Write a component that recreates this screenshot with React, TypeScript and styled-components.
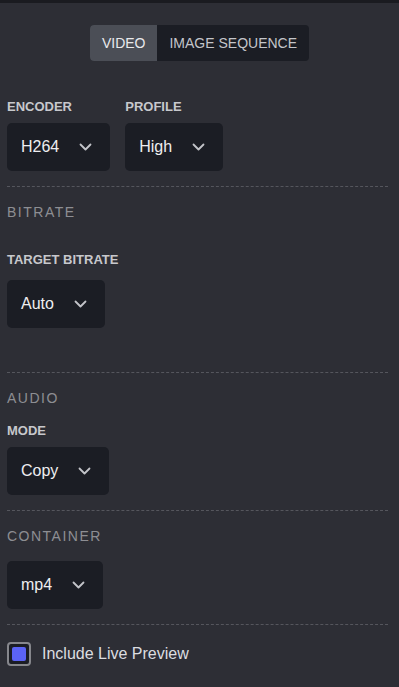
import React, { useState } from 'react';
import styled, { createGlobalStyle } from 'styled-components';

const GlobalStyle = createGlobalStyle`
    html, body {
        margin: 0;
        padding: 0;
        background: #2d2e35;
    }
    body {
        font-family: "Liberation Sans", Arial, sans-serif;
        color: #e6e6e8;
    }
`;

const Panel = styled.div`
    width: 399px;
    min-height: 687px;
    box-sizing: border-box;
    background: #2d2e35;
    border-top: 3px solid #1a1b20;
    padding: 22px 11px 0 7px;
    display: flex;
    flex-direction: column;
`;

const TabBar = styled.div`
    align-self: center;
    display: flex;
    background: #1b1d24;
    border-radius: 4px;
    overflow: hidden;
    margin-bottom: 38px;
    transform: translateX(2px);
`;

const Tab = styled.button<{ $active?: boolean }>`
    height: 36px;
    padding: 0 12px;
    border: none;
    background: ${(p) => (p.$active ? '#4b4e56' : 'transparent')};
    color: ${(p) => (p.$active ? '#e8e9ec' : '#c4c5ca')};
    font-family: inherit;
    font-size: 14px;
    cursor: pointer;
`;

const Section = styled.div<{ $pb?: number }>`
    display: flex;
    flex-direction: column;
    padding-bottom: ${(p) => p.$pb ?? 15}px;
    border-bottom: 1px dashed #55565d;
`;

const Heading = styled.div`
    font-size: 14px;
    letter-spacing: 1.5px;
    color: #8d8e93;
    margin: 17px 0 0;
    line-height: 16px;
`;

const FieldRow = styled.div`
    display: flex;
    gap: 15px;
`;

const Field = styled.div<{ $mt?: number }>`
    display: flex;
    flex-direction: column;
    align-items: flex-start;
    margin-top: ${(p) => p.$mt ?? 0}px;
`;

const Label = styled.div<{ $gap?: number }>`
    font-size: 13px;
    font-weight: bold;
    color: #c7c8cc;
    line-height: 15px;
    margin-bottom: ${(p) => p.$gap ?? 9}px;
`;

const SelectBox = styled.button`
    height: 48px;
    display: flex;
    align-items: center;
    gap: 20px;
    padding: 0 18px 0 14px;
    background: #1b1d24;
    border: none;
    border-radius: 5px;
    color: #eeeef0;
    font-family: inherit;
    font-size: 16px;
    cursor: pointer;
`;

const Chevron = styled.svg`
    width: 13px;
    height: 8px;
    display: block;
`;

const CheckRow = styled.label`
    display: flex;
    align-items: center;
    gap: 11px;
    margin-top: 17px;
    font-size: 16px;
    color: #dcdde0;
    cursor: pointer;
`;

const CheckBox = styled.span<{ $checked: boolean }>`
    width: 24px;
    height: 24px;
    box-sizing: border-box;
    border: 2px solid #86878c;
    border-radius: 4px;
    background: #1b1d24;
    display: flex;
    align-items: center;
    justify-content: center;

    &::after {
        content: '';
        width: 14px;
        height: 14px;
        border-radius: 2px;
        background: ${(p) => (p.$checked ? '#5b63f5' : 'transparent')};
    }
`;

const Select: React.FC<{ value: string }> = ({ value }) => (
    <SelectBox>
        {value}
        <Chevron viewBox="0 0 13 8" fill="none">
            <path d="M1.5 1.5 L6.5 6.5 L11.5 1.5" stroke="#c3c4c9" strokeWidth="1.8" strokeLinecap="round" strokeLinejoin="round" />
        </Chevron>
    </SelectBox>
);

const App: React.FC = () => {
    const [tab, setTab] = useState<'video' | 'sequence'>('video');
    const [preview, setPreview] = useState(true);

    return (
        <Panel>
            <GlobalStyle />
            <TabBar>
                <Tab $active={tab === 'video'} onClick={() => setTab('video')}>VIDEO</Tab>
                <Tab $active={tab === 'sequence'} onClick={() => setTab('sequence')}>IMAGE SEQUENCE</Tab>
            </TabBar>

            <Section>
                <FieldRow>
                    <Field>
                        <Label>ENCODER</Label>
                        <Select value="H264" />
                    </Field>
                    <Field>
                        <Label>PROFILE</Label>
                        <Select value="High" />
                    </Field>
                </FieldRow>
            </Section>

            <Section $pb={44}>
                <Heading>BITRATE</Heading>
                <Field $mt={32}>
                    <Label $gap={13}>TARGET BITRATE</Label>
                    <Select value="Auto" />
                </Field>
            </Section>

            <Section>
                <Heading>AUDIO</Heading>
                <Field $mt={17}>
                    <Label>MODE</Label>
                    <Select value="Copy" />
                </Field>
            </Section>

            <Section>
                <Heading>CONTAINER</Heading>
                <Field $mt={17}>
                    <Select value="mp4" />
                </Field>
            </Section>

            <CheckRow onClick={() => setPreview(!preview)}>
                <CheckBox $checked={preview} />
                Include Live Preview
            </CheckRow>
        </Panel>
    );
};

export default App;
